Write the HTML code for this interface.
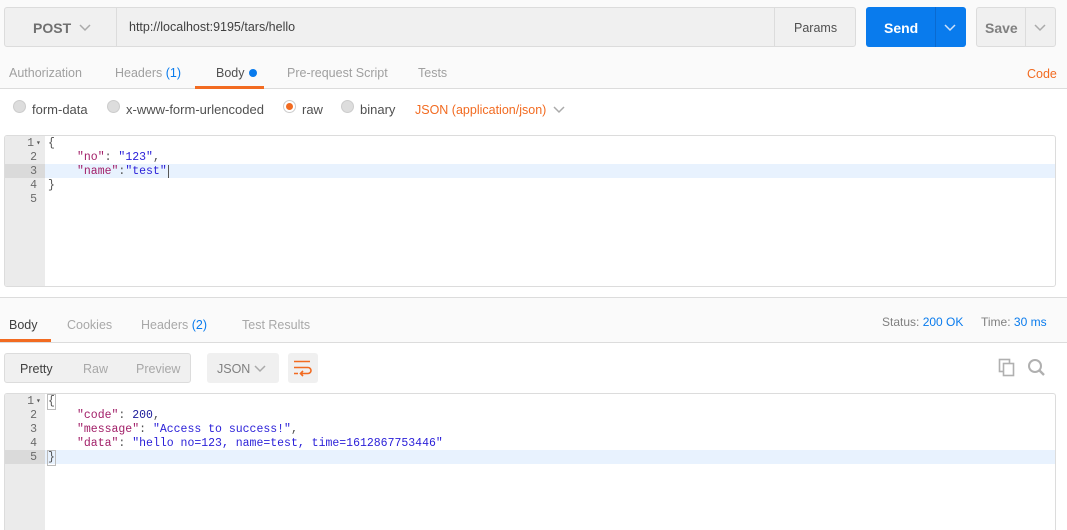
<!DOCTYPE html>
<html><head><meta charset="utf-8"><style>
*{box-sizing:border-box;margin:0;padding:0}
html,body{width:1067px;height:530px;overflow:hidden}
body{background:#fff;font-family:"Liberation Sans",sans-serif;font-size:12px;color:#505050;position:relative}
.a{position:absolute}
.box{position:absolute;background:#f0f0f0;border:1px solid #dcdcdc;border-radius:3px}
.t{position:absolute;white-space:nowrap}
.mono{font-family:"Liberation Mono",monospace;font-size:11.5px}
.ln{position:absolute;left:0;width:41px;text-align:right;padding-right:9px;color:#6a6a6a}
.k{color:#a11d67}.s{color:#2a1fd8}.n{color:#1a1a9a}
.radio{position:absolute;width:13px;height:13px;border-radius:50%;background:#ddd;border:1px solid #ccc}
</style></head><body>
<div class="a" style="left:0;top:0;width:1067px;height:89px;background:#fafafa;border-bottom:1px solid #dcdcdc"></div>
<div class="box" style="left:4px;top:7px;width:852px;height:40px"></div>
<div class="a" style="left:116px;top:7px;width:1px;height:40px;background:#dcdcdc"></div>
<div class="a" style="left:774px;top:7px;width:1px;height:40px;background:#dcdcdc"></div>
<div class="t" style="left:33px;top:20px;font-size:14px;font-weight:bold;color:#707070">POST</div>
<svg class="a" style="left:78px;top:23px" width="14" height="10"><path d="M2 2 L7 7 L12 2" stroke="#aaa" stroke-width="1.5" fill="none"/></svg>
<div class="t" style="left:129px;top:20px;font-size:12.5px;color:#404040">http://localhost:9195/tars/hello</div>
<div class="t" style="left:794px;top:21px;font-size:12.5px;color:#505050">Params</div>
<div class="a" style="left:866px;top:7px;width:100px;height:40px;background:#097bed;border-radius:3px"></div>
<div class="a" style="left:935px;top:7px;width:1px;height:40px;background:#0a6ad0"></div>
<div class="t" style="left:884px;top:20px;font-size:14px;font-weight:bold;color:#fff">Send</div>
<svg class="a" style="left:943px;top:23px" width="14" height="10"><path d="M2 2 L7 7 L12 2" stroke="#cfe2fa" stroke-width="1.5" fill="none"/></svg>
<div class="box" style="left:976px;top:7px;width:80px;height:40px"></div>
<div class="a" style="left:1025px;top:7px;width:1px;height:40px;background:#dcdcdc"></div>
<div class="t" style="left:985px;top:20px;font-size:14px;font-weight:bold;color:#808080">Save</div>
<svg class="a" style="left:1033px;top:23px" width="14" height="10"><path d="M2 2 L7 7 L12 2" stroke="#aaa" stroke-width="1.5" fill="none"/></svg>

<div class="t" style="left:9px;top:66px;font-size:12.5px;color:#a0a0a0">Authorization</div>
<div class="t" style="left:115px;top:66px;font-size:12.5px;color:#a0a0a0">Headers <span style="color:#097bed">(1)</span></div>
<div class="t" style="left:216px;top:66px;font-size:12.5px;color:#505050">Body</div>
<div class="a" style="left:249px;top:69px;width:8px;height:8px;border-radius:50%;background:#097bed"></div>
<div class="a" style="left:195px;top:86px;width:69px;height:3px;background:#f26b21"></div>
<div class="t" style="left:287px;top:66px;font-size:12.5px;color:#a0a0a0">Pre-request Script</div>
<div class="t" style="left:418px;top:66px;font-size:12.5px;color:#a0a0a0">Tests</div>
<div class="t" style="left:1027px;top:67px;font-size:12.5px;color:#f26b21">Code</div>

<div class="radio" style="left:13px;top:100px"></div>
<div class="t" style="left:32px;top:102px;font-size:13px">form-data</div>
<div class="radio" style="left:107px;top:100px"></div>
<div class="t" style="left:126px;top:102px;font-size:13px">x-www-form-urlencoded</div>
<div class="radio" style="left:283px;top:100px;background:#fff;border-color:#ccc"></div>
<div class="a" style="left:286px;top:103px;width:7px;height:7px;border-radius:50%;background:#f26b21"></div>
<div class="t" style="left:302px;top:102px;font-size:13px">raw</div>
<div class="radio" style="left:341px;top:100px"></div>
<div class="t" style="left:360px;top:102px;font-size:13px">binary</div>
<div class="t" style="left:415px;top:103px;font-size:12.5px;color:#f26b21">JSON (application/json)</div>
<svg class="a" style="left:552px;top:105px" width="14" height="10"><path d="M2 2 L7 7 L12 2" stroke="#aaa" stroke-width="1.5" fill="none"/></svg>

<div class="a" style="left:4px;top:135px;width:1052px;height:152px;border:1px solid #dcdcdc;border-radius:3px;overflow:hidden">
 <div class="a" style="left:0;top:0;width:40px;height:152px;background:#ebebeb"></div>
 <div class="a" style="left:0;top:28px;width:40px;height:14px;background:#dadada"></div>
 <div class="a" style="left:40px;top:28px;width:1012px;height:14px;background:#e8f2fe"></div>
 <div class="mono" style="position:absolute;left:0;top:1px;line-height:14px;width:1050px">
  <div style="position:relative;height:14px"><span class="ln" style="padding-right:12px">1</span><span class="a" style="left:31px;font-size:8px;color:#555">▾</span><span class="a" style="left:43px">{</span></div>
  <div style="position:relative;height:14px"><span class="ln">2</span><span class="a" style="left:72px"><span class="k">"no"</span>: <span class="s">"123"</span>,</span></div>
  <div style="position:relative;height:14px"><span class="ln">3</span><span class="a" style="left:72px"><span class="k">"name"</span>:<span class="s">"test"</span><span style="border-left:1px solid #555;margin-left:1px"></span></span></div>
  <div style="position:relative;height:14px"><span class="ln">4</span><span class="a" style="left:43px">}</span></div>
  <div style="position:relative;height:14px"><span class="ln">5</span></div>
 </div>
</div>

<div class="a" style="left:0;top:297px;width:1067px;height:46px;background:#fafafa;border-top:1px solid #dcdcdc;border-bottom:1px solid #dcdcdc"></div>
<div class="t" style="left:9px;top:318px;font-size:12.5px;color:#404040">Body</div>
<div class="a" style="left:0;top:339px;width:51px;height:3px;background:#f26b21"></div>
<div class="t" style="left:67px;top:318px;font-size:12.5px;color:#a8a8a8">Cookies</div>
<div class="t" style="left:141px;top:318px;font-size:12.5px;color:#a8a8a8">Headers <span style="color:#097bed">(2)</span></div>
<div class="t" style="left:242px;top:318px;font-size:12.5px;color:#a8a8a8">Test Results</div>
<div class="t" style="left:882px;top:315px;font-size:12px;color:#808080">Status: <span style="color:#097bed">200 OK</span></div>
<div class="t" style="left:981px;top:315px;font-size:12px;color:#808080">Time: <span style="color:#097bed">30 ms</span></div>

<div class="box" style="left:4px;top:353px;width:187px;height:30px"></div>
<div class="t" style="left:20px;top:362px;font-size:12.5px;color:#404040">Pretty</div>
<div class="t" style="left:83px;top:362px;font-size:12.5px;color:#a8a8a8">Raw</div>
<div class="t" style="left:136px;top:362px;font-size:12.5px;color:#a8a8a8">Preview</div>
<div class="a" style="left:207px;top:353px;width:72px;height:30px;background:#f0f0f0;border-radius:3px"></div>
<div class="t" style="left:217px;top:362px;font-size:12.5px;color:#808080">JSON</div>
<svg class="a" style="left:253px;top:364px" width="14" height="10"><path d="M2 2 L7 7 L12 2" stroke="#aaa" stroke-width="1.5" fill="none"/></svg>
<div class="a" style="left:288px;top:353px;width:30px;height:30px;background:#f0f0f0;border-radius:3px"></div>
<svg class="a" style="left:292px;top:359px" width="22" height="18"><path d="M2 2.5H18M2 8.5H16a3 3 0 0 1 0 6H9M2 14.5H6M11 12l-2.5 2.5L11 17" stroke="#f26b21" stroke-width="1.6" fill="none"/></svg>
<svg class="a" style="left:998px;top:358px" width="20" height="20"><rect x="1.5" y="1.5" width="10" height="12" fill="none" stroke="#b0b0b0" stroke-width="1.6"/><rect x="5.5" y="5.5" width="10" height="12" fill="#fff" stroke="#b0b0b0" stroke-width="1.6"/></svg>
<svg class="a" style="left:1027px;top:358px" width="20" height="20"><circle cx="8" cy="8" r="6" fill="none" stroke="#b0b0b0" stroke-width="2"/><path d="M12.5 12.5L17 17" stroke="#b0b0b0" stroke-width="2.4"/></svg>

<div class="a" style="left:4px;top:393px;width:1052px;height:137px;border:1px solid #dcdcdc;border-bottom:none;border-radius:3px 3px 0 0;overflow:hidden">
 <div class="a" style="left:0;top:0;width:40px;height:150px;background:#ebebeb"></div>
 <div class="a" style="left:0;top:56px;width:40px;height:14px;background:#dadada"></div>
 <div class="a" style="left:40px;top:56px;width:1012px;height:14px;background:#e8f2fe"></div>
 <div class="mono" style="position:absolute;left:0;top:1px;line-height:14px;width:1050px">
  <div style="position:relative;height:14px"><span class="ln" style="padding-right:12px">1</span><span class="a" style="left:31px;font-size:8px;color:#555">▾</span><span class="a" style="left:43px;outline:1px solid #bbb">{</span></div>
  <div style="position:relative;height:14px"><span class="ln">2</span><span class="a" style="left:72px"><span class="k">"code"</span>: <span class="n">200</span>,</span></div>
  <div style="position:relative;height:14px"><span class="ln">3</span><span class="a" style="left:72px"><span class="k">"message"</span>: <span class="s">"Access to success!"</span>,</span></div>
  <div style="position:relative;height:14px"><span class="ln">4</span><span class="a" style="left:72px"><span class="k">"data"</span>: <span class="s">"hello no=123, name=test, time=1612867753446"</span></span></div>
  <div style="position:relative;height:14px"><span class="ln">5</span><span class="a" style="left:43px;outline:1px solid #bbb">}</span></div>
 </div>
</div>
</body></html>
